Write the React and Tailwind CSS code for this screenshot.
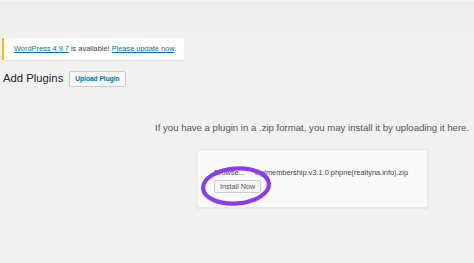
export default function App() {
    return (
        <div
            className="w-[474px] h-[263px] overflow-hidden bg-[#f1f1f1] text-[#444] relative"
            style={{ fontFamily: '"Liberation Sans", Arial, sans-serif' }}>
            <div className="h-[31px] bg-[#eeeeee] border-t border-[#f6f6f6]" />

            {/* update notice */}
            <div className="ml-[2px] mt-[7px] w-[182px] h-[22px] bg-white border-l-[2px] border-[#ffb900] shadow-[0_1px_1px_rgba(0,0,0,0.06)] flex items-center pl-[10px] text-[7.4px]">
                <a className="text-[#0073aa] underline">WordPress 4.9.7</a>
                <span>&nbsp;is available!&nbsp;</span>
                <a className="text-[#0073aa] underline">Please update now</a>
                <span>.</span>
            </div>

            {/* heading */}
            <div className="flex items-center mt-[11px] ml-[3px]">
                <h1 className="text-[11.3px] text-[#23282d] leading-none">Add Plugins</h1>
                <button className="ml-[6px] h-[16px] px-[5px] bg-[#f7f7f7] border border-[#ccc] rounded-[2px] text-[6.6px] font-bold text-[#0073aa] leading-none">
                    Upload Plugin
                </button>
            </div>

            <p className="mt-[36px] pl-[155px] text-[9.6px] text-[#555] leading-none whitespace-nowrap">
                If you have a plugin in a .zip format, you may install it by uploading it here.
            </p>

            {/* upload card */}
            <div className="mt-[16px] ml-[197px] w-[231px] h-[59px] bg-[#fafafa] border border-[#e8e8e8] shadow-[0_1px_1px_rgba(0,0,0,0.04)] pt-[19px] pl-[16px]">
                <div className="flex items-center text-[7.4px] text-[#444] leading-none whitespace-nowrap">
                    <span>Browse...</span>
                    <span className="ml-[10px]">wplmembership.v3.1.0.phpne(realtyna.info).zip</span>
                </div>
                <button className="block mt-[4px] h-[13px] px-[5px] bg-[#f7f7f7] border border-[#ccc] rounded-[2px] text-[7.2px] text-[#555] leading-none">
                    Install Now
                </button>
            </div>

            {/* annotation circle */}
            <svg className="absolute left-[198px] top-[162px]" width="78" height="48" viewBox="0 0 78 48">
                <ellipse cx="38" cy="24" rx="33" ry="17.5" fill="none" stroke="#8b3cf0" strokeWidth="4.2" transform="rotate(-4 38 24)" />
            </svg>
        </div>
    );
}
